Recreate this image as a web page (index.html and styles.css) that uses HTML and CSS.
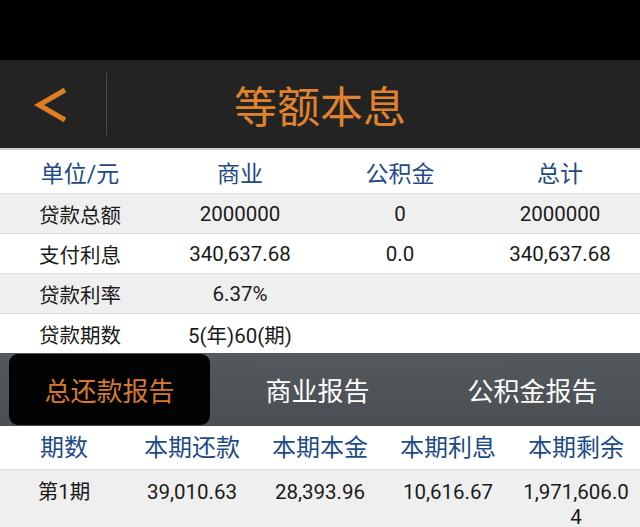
FILE: index.html
```html
<!DOCTYPE html>
<html lang="zh-CN">
<head>
<meta charset="utf-8">
<title>等额本息</title>
<link rel="stylesheet" href="styles.css">
</head>
<body>
<div class="status"></div>
<header class="topbar">
  <button class="back" aria-label="返回">
    <svg width="34" height="36" viewBox="0 0 34 36"><path d="M31 3 L5 18 L31 33" fill="none" stroke="#e07d22" stroke-width="5" stroke-linejoin="miter"/></svg>
  </button>
  <span class="divider"></span>
  <h1 class="title">等额本息</h1>
  <span class="spacer"></span>
</header>

<section class="summary">
  <div class="row head">
    <div>单位/元</div><div>商业</div><div>公积金</div><div>总计</div>
  </div>
  <div class="row shade">
    <div>贷款总额</div><div>2000000</div><div>0</div><div>2000000</div>
  </div>
  <div class="row">
    <div>支付利息</div><div>340,637.68</div><div>0.0</div><div>340,637.68</div>
  </div>
  <div class="row shade">
    <div>贷款利率</div><div>6.37%</div><div></div><div></div>
  </div>
  <div class="row">
    <div>贷款期数</div><div>5(年)60(期)</div><div></div><div></div>
  </div>
</section>

<nav class="tabs">
  <div class="tab active">总还款报告</div>
  <div class="tab">商业报告</div>
  <div class="tab">公积金报告</div>
</nav>

<section class="schedule">
  <div class="srow shead">
    <div>期数</div><div>本期还款</div><div>本期本金</div><div>本期利息</div><div>本期剩余</div>
  </div>
  <div class="srow shade">
    <div>第1期</div><div>39,010.63</div><div>28,393.96</div><div>10,616.67</div><div>1,971,606.04</div>
  </div>
</section>
</body>
</html>
```

FILE: styles.css
```css
html, body {
  margin: 0;
  padding: 0;
  background: #fff;
}

body {
  width: 640px;
  height: 527px;
  overflow: hidden;
  font-family: Roboto, "Noto Sans CJK SC", sans-serif;
  color: #1a1a1a;
}

.status {
  height: 60px;
  background: #000;
}

.topbar {
  height: 88px;
  background: #232323;
  border-bottom: 2px solid #cfcfcf;
  display: flex;
  align-items: center;
}

.back {
  width: 106px;
  height: 88px;
  border: 0;
  padding: 0;
  background: transparent;
  display: flex;
  align-items: center;
  justify-content: center;
}

.back svg {
  margin-left: -4px;
  margin-top: 2px;
}

.divider {
  width: 1px;
  height: 62px;
  background: #4a4a4a;
}

.title {
  flex: 1;
  margin: 0;
  text-align: center;
  font-family: "Noto Sans CJK SC", sans-serif;
  font-weight: 400;
  font-size: 43px;
  color: #e0822e;
}

.spacer {
  width: 107px;
}

/* summary table */
.row {
  display: grid;
  grid-template-columns: repeat(4, 160px);
  height: 39px;
  border-top: 1px solid #dcdcdc;
  align-items: center;
  text-align: center;
  font-size: 20.5px;
}

.row.head {
  height: 43px;
  border-top: 0;
  color: #1e4a86;
  font-size: 23px;
}

.shade {
  background: #efefef;
}

/* report tabs */
.tabs {
  height: 73px;
  background: linear-gradient(#54595e, #4a4f54);
  display: flex;
  align-items: center;
  padding-left: 9px;
}

.tab {
  height: 71px;
  display: flex;
  align-items: center;
  justify-content: center;
  color: #fff;
  font-size: 26px;
  flex: 1;
}

.tab.active {
  flex: 0 0 201px;
  background: #030303;
  border-radius: 9px;
  color: #d67a30;
}

/* schedule */
.srow {
  display: grid;
  grid-template-columns: repeat(5, 128px);
  align-items: start;
  text-align: center;
  font-size: 20.5px;
}

.srow > div {
  padding: 0 8px;
  word-break: break-all;
  line-height: 25px;
}

.srow.shead {
  height: 44px;
  padding-top: 2px;
  align-items: center;
  color: #1e4a86;
  font-size: 24px;
  border-bottom: 1px solid #dcdcdc;
  box-sizing: border-box;
}

.srow.shade {
  padding-top: 10px;
  height: 60px;
}
```
